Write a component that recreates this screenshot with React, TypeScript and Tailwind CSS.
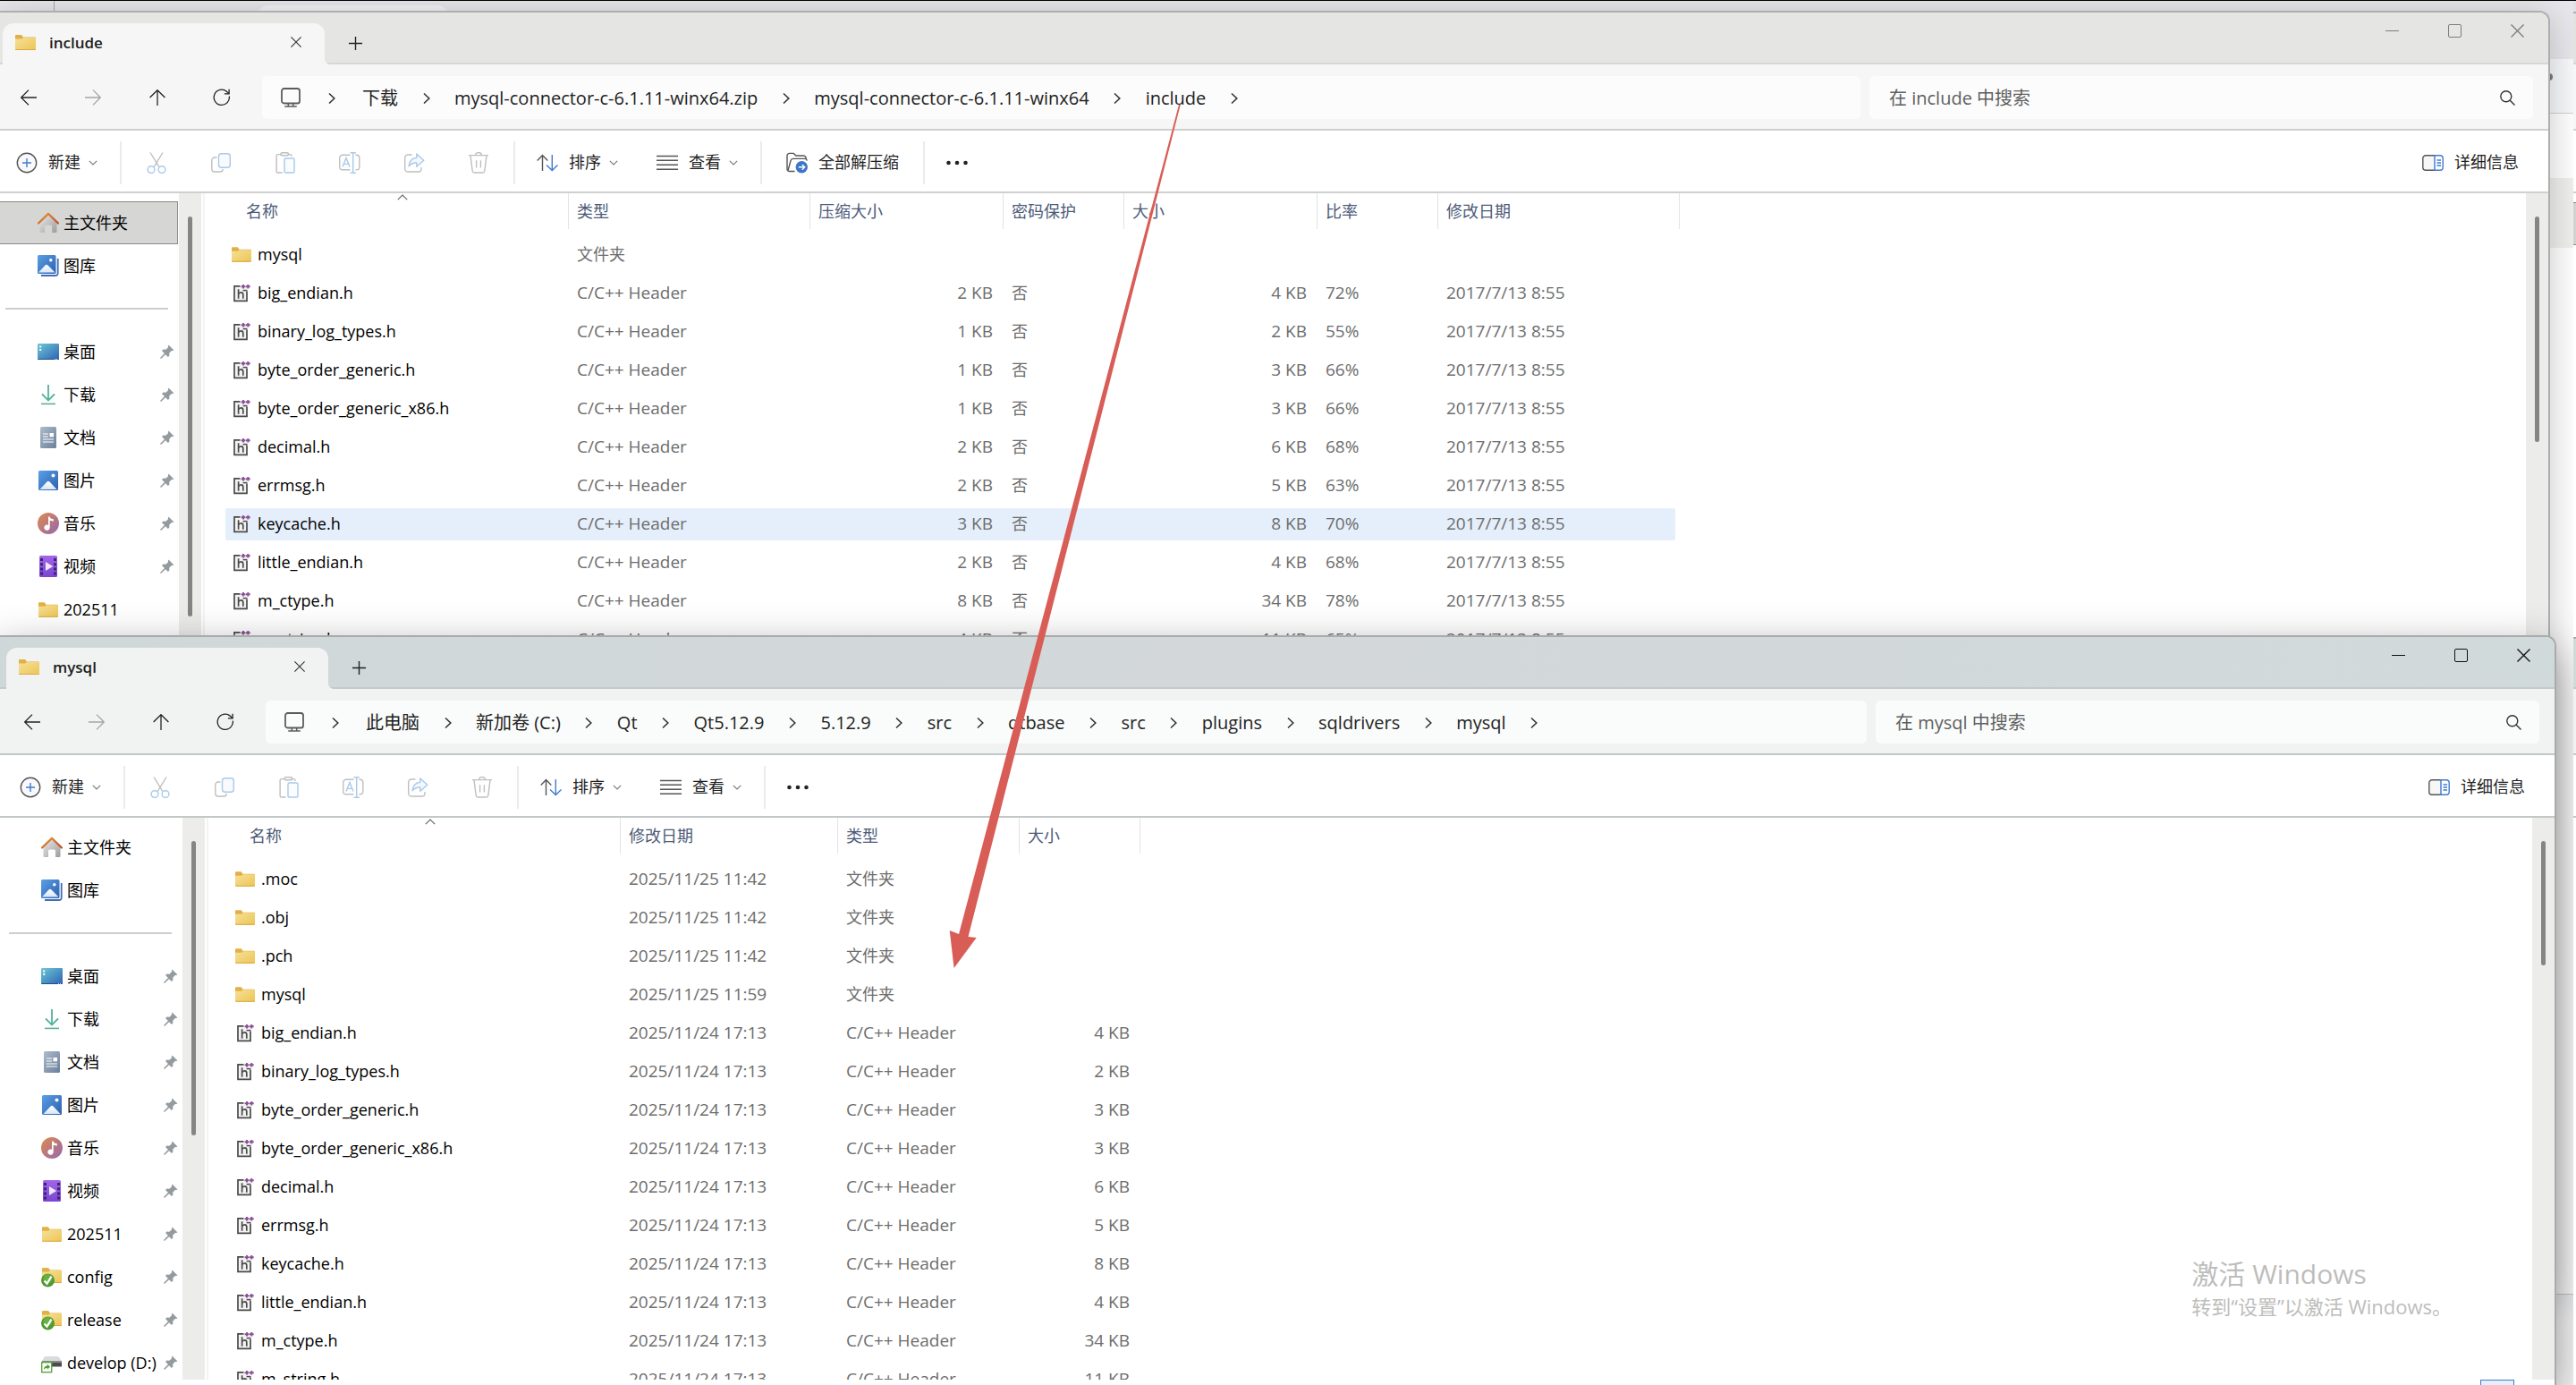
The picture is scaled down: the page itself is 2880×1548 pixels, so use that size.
import React from "react";
import type { ReactNode } from "react";

type IconProps = { className?: string };

const FolderIcon = ({ className = "h-[17px] w-[22px]" }: IconProps) => (
  <svg viewBox="0 0 23 17" className={className} aria-hidden="true">
    <defs>
      <linearGradient id="folderFace" x1="0" y1="0" x2="1" y2="1">
        <stop offset="0" stopColor="#f6e09a" />
        <stop offset="1" stopColor="#ecc554" />
      </linearGradient>
    </defs>
    <path d="M0 1a1 1 0 0 1 1-1h6l2 2.4H22a1 1 0 0 1 1 1V6H0z" fill="#e2b044" />
    <path d="M0 4.6h7.4L9 3h14v13a1 1 0 0 1-1 1H1a1 1 0 0 1-1-1z" fill="url(#folderFace)" />
    <path d="M0 16h23a1 1 0 0 1-1 1H1a1 1 0 0 1-1-1z" fill="#d9a83f" />
  </svg>
);

const SyncedFolderIcon = () => (
  <svg viewBox="0 0 24 24" className="size-6" aria-hidden="true">
    <path d="M1 3a1 1 0 0 1 1-1h6l2 2.4h12a1 1 0 0 1 1 1V8H1z" fill="#e2b044" />
    <path d="M1 6.6h7.4L10 5h13v13a1 1 0 0 1-1 1H2a1 1 0 0 1-1-1z" fill="url(#folderFace)" />
    <path d="M1 18h22a1 1 0 0 1-1 1H2a1 1 0 0 1-1-1z" fill="#d9a83f" />
    <circle cx="7.5" cy="16" r="7.5" fill="#4f9a33" />
    <circle cx="7.5" cy="14" r="5" fill="#7cc04f" opacity=".6" />
    <path d="M3.5 16.5l3 3.2 5-8" fill="none" stroke="#fff" strokeWidth="2.2" />
  </svg>
);

const HeaderFileIcon = () => (
  <svg viewBox="0 0 20 20" className="size-5" aria-hidden="true">
    <rect x="1" y="2" width="14" height="16.500" fill="#f3f3f3" />
    <path d="M7.500 1.900H1v16.500h14V7.500" fill="none" stroke="#4a4a4a" strokeWidth="1.700" />
    <path d="M5.600 5.300v10.400M5.600 10.800c.6-1.400 1.700-2 2.900-2 1.600 0 2.300 1 2.300 2.500v4.400" fill="none" stroke="#4a4a4a" strokeWidth="1.700" />
    <path d="M10.600 6.600h4.900" stroke="#4a4a4a" strokeWidth="1.500" />
    <path d="M11 -.2v4.800M8.600 2.200h4.800M16.300 -.2v4.800M13.900 2.200h4.800" stroke="#8a4f97" strokeWidth="1.900" />
  </svg>
);

const HomeIcon = () => (
  <svg viewBox="0 0 24 24" className="size-6" aria-hidden="true">
    <defs>
      <linearGradient id="homeWall" x1="0" y1="0" x2="1" y2="1">
        <stop offset="0" stopColor="#e9e9e9" />
        <stop offset="1" stopColor="#9d9d9d" />
      </linearGradient>
      <linearGradient id="homeRoof" x1="0" y1="0" x2="1" y2="1">
        <stop offset="0" stopColor="#e39a3c" />
        <stop offset="1" stopColor="#c14f27" />
      </linearGradient>
    </defs>
    <path d="M2.500 11.500L12 3l9.500 8.500V22a1 1 0 0 1-1 1H16v-7a1.500 1.500 0 0 0-1.500-1.500h-5A1.500 1.500 0 0 0 8 16v7H3.500a1 1 0 0 1-1-1z" fill="url(#homeWall)" />
    <path d="M1 12.500L12 1.800l11 10.700" fill="none" stroke="url(#homeRoof)" strokeWidth="2.400" strokeLinecap="round" strokeLinejoin="round" />
  </svg>
);

const BlueGradient = () => (
  <defs>
    <linearGradient id="photoBlue" x1="0" y1="0" x2="1" y2="1">
      <stop offset="0" stopColor="#5aa0e6" />
      <stop offset="1" stopColor="#2e5fae" />
    </linearGradient>
    <linearGradient id="photoHill" x1="0" y1="0" x2="0" y2="1">
      <stop offset="0" stopColor="#fff" />
      <stop offset="1" stopColor="#d5e6f8" />
    </linearGradient>
  </defs>
);

const GalleryIcon = () => (
  <svg viewBox="0 0 24 24" className="size-6" aria-hidden="true">
    <BlueGradient />
    <path d="M22.700 4v16.500a2.500 2.500 0 0 1-2.500 2.500H4" fill="none" stroke="#3f6db8" strokeWidth="1.800" />
    <rect x="0" y="0" width="20.500" height="21" rx="1.500" fill="url(#photoBlue)" />
    <circle cx="14.800" cy="5.800" r="1.700" fill="#fff" />
    <path d="M1 19.500L8.500 11.500a2 2 0 0 1 3 0l8 8z" fill="url(#photoHill)" />
  </svg>
);

const PicturesIcon = () => (
  <svg viewBox="0 0 24 24" className="size-6" aria-hidden="true">
    <BlueGradient />
    <rect x="1" y="1" width="22" height="22" rx="1.500" fill="url(#photoBlue)" />
    <circle cx="17.500" cy="6.500" r="2" fill="#fff" />
    <path d="M2.500 22l8-8.500a2 2 0 0 1 3 0l8 8.500z" fill="url(#photoHill)" />
  </svg>
);

const DesktopIcon = () => (
  <svg viewBox="0 0 24 24" className="size-6" aria-hidden="true">
    <defs>
      <linearGradient id="deskFace" x1="0" y1="0" x2="1" y2="1">
        <stop offset="0" stopColor="#6cc9d6" />
        <stop offset="1" stopColor="#2f62b3" />
      </linearGradient>
    </defs>
    <rect x="0" y="3" width="24" height="18" rx="1.200" fill="url(#deskFace)" />
    <path d="M0 20h24a1 1 0 0 1-1 1H1a1 1 0 0 1-1-1z" fill="#1f4f86" />
    <path d="M2.200 5.500h2v2h-2zM2.200 9h2v2h-2z" fill="#fff" />
    <path d="M19 20.400h4" stroke="#cfe0f4" strokeWidth="1" strokeDasharray="1 1" />
  </svg>
);

const DownloadsIcon = () => (
  <svg viewBox="0 0 24 24" className="size-6" fill="none" stroke="#5bb38c" strokeWidth="1.800" aria-hidden="true">
    <path d="M12 1v17M5 11.500l7 7 7-7" stroke="#54b39b" />
    <path d="M4 22.400h16" strokeWidth="1.600" />
  </svg>
);

const DocumentsIcon = () => (
  <svg viewBox="0 0 24 24" className="size-6" aria-hidden="true">
    <defs>
      <linearGradient id="docFace" x1="0" y1="0" x2="1" y2="1">
        <stop offset="0" stopColor="#aebccb" />
        <stop offset="1" stopColor="#6a7f9b" />
      </linearGradient>
    </defs>
    <rect x="3" y="0" width="18" height="24" rx="1.500" fill="url(#docFace)" />
    <path d="M6 8h6M6 11h6M6 14h12M6 17h12" stroke="#fff" strokeWidth="1.200" />
    <path d="M13.500 7h4.500v4.300h-4.500z" fill="#fff" />
  </svg>
);

const MusicIcon = () => (
  <svg viewBox="0 0 24 24" className="size-6" aria-hidden="true">
    <defs>
      <linearGradient id="musicFace" x1="0" y1="0" x2="1" y2="1">
        <stop offset="0" stopColor="#e08b4c" />
        <stop offset="1" stopColor="#9467b0" />
      </linearGradient>
    </defs>
    <circle cx="12" cy="12" r="12" fill="url(#musicFace)" />
    <path d="M12 4.500h1.700c.3 1.800 1.800 2.600 4 2.600v2.700c-1.700 0-3-.4-4-1.200V16.500A3.200 3.200 0 1 1 12 13.800z" fill="#fff" />
  </svg>
);

const VideosIcon = () => (
  <svg viewBox="0 0 24 24" className="size-6" aria-hidden="true">
    <defs>
      <linearGradient id="videoFace" x1="0" y1="0" x2="0" y2="1">
        <stop offset="0" stopColor="#a266e6" />
        <stop offset="1" stopColor="#7a45d3" />
      </linearGradient>
    </defs>
    <rect x="2" y="0" width="20" height="24" rx="1.500" fill="url(#videoFace)" />
    <path d="M3 3h3v3H3zM3 8.200h3v3H3zM3 13.400h3v3H3zM3 18.600h3v3H3zM18 3h3v3h-3zM18 8.200h3v3h-3zM18 13.400h3v3h-3zM18 18.600h3v3h-3z" fill="#3c2378" />
    <path d="M9 7l8.200 5L9 17z" fill="#eee8fa" />
  </svg>
);

const DriveIcon = () => (
  <svg viewBox="0 0 24 24" className="size-6" aria-hidden="true">
    <path d="M4 5h15l4 5H1z" fill="#d9dcde" />
    <path d="M1 10h22v6.500H1z" fill="#4b4b4b" />
    <path d="M1 10h22v2H1z" fill="#8a8a8a" />
    <rect x="0.700" y="11.700" width="11" height="11" fill="#fff" stroke="#5aa53c" strokeWidth="1.400" />
    <path d="M2.800 20c.2-3 1.600-4.600 4-4.600v-1.600l3.300 3-3.300 3v-1.700c-1.700 0-2.900.5-4 1.900z" fill="#4f9d34" />
  </svg>
);

const PinIcon = () => (
  <svg viewBox="0 0 16 16" className="size-4" aria-hidden="true">
    <path d="M9.500.5l6 6-1.500.6-1.200-.1-2.600 2.700.2 2.800-1.500 1.500L6 11.200 1 16l-1-.9 4.900-5L2 7.100l1.500-1.500 2.800.2L9 3.200l-.1-1.300z" fill="#949b9f" />
  </svg>
);

const ArrowIcon = ({ className = "" }: IconProps) => (
  <svg viewBox="0 0 18 18" className={"size-[18px] " + className} fill="none" stroke="currentColor" strokeWidth="1.300" aria-hidden="true">
    <path d="M.7 9H18M9 .6L.7 9 9 17.400" />
  </svg>
);

const RefreshIcon = () => (
  <svg viewBox="0 0 20 20" className="size-5" fill="none" stroke="currentColor" strokeWidth="1.300" aria-hidden="true">
    <path d="M18.300 8.600A8.600 8.600 0 1 1 15.400 3.300L18 5.800" />
    <path d="M18.100 .8v5.100h-5.200" />
  </svg>
);

const MonitorIcon = () => (
  <svg viewBox="0 0 22 22" className="size-[22px]" fill="none" stroke="#5c5c5c" strokeWidth="1.800" aria-hidden="true">
    <rect x="1" y="1" width="20" height="16.500" rx="2.600" />
    <path d="M8.300 17.500v3.200M13.700 17.500v3.200M4.200 21h13.600" strokeWidth="1.500" />
  </svg>
);

const ChevronRight = () => (
  <svg viewBox="0 0 8 14" className="h-3.5 w-2" fill="none" stroke="#333" strokeWidth="1.600" aria-hidden="true">
    <path d="M1 1.500L6.800 7 1 12.500" />
  </svg>
);

const ChevronDown = () => (
  <svg viewBox="0 0 10 6" className="h-1.5 w-2.5" fill="none" stroke="#777" strokeWidth="1.100" aria-hidden="true">
    <path d="M.8 .8L5 5 9.200 .8" />
  </svg>
);

const CrossIcon = ({ className = "size-3" }: IconProps) => (
  <svg viewBox="0 0 15 15" className={className} fill="none" stroke="currentColor" strokeWidth="1.400" aria-hidden="true">
    <path d="M.5 .5l14 14M14.500 .5l-14 14" />
  </svg>
);

const SearchIcon = () => (
  <svg viewBox="0 0 17 17" className="size-[17px]" fill="none" stroke="#333" strokeWidth="1.400" aria-hidden="true">
    <circle cx="6.800" cy="6.800" r="6" />
    <path d="M11 11l5.500 5.500" />
  </svg>
);

const NewIcon = () => (
  <svg viewBox="0 0 24 24" className="size-6" fill="none" aria-hidden="true">
    <circle cx="12" cy="12" r="10.700" fill="#f9f9fb" stroke="#555" strokeWidth="1.400" />
    <path d="M12 7v10M7 12h10" stroke="#3f7bd0" strokeWidth="1.400" />
  </svg>
);

const CutIcon = () => (
  <svg viewBox="0 0 24 24" className="size-6" fill="none" strokeWidth="1.400" aria-hidden="true">
    <path d="M5 .5l9.700 15.800M19 .5L9.300 16.300" stroke="#bfbfbf" />
    <circle cx="6" cy="19.600" r="3.900" stroke="#a9c9ec" />
    <circle cx="18" cy="19.600" r="3.900" stroke="#a9c9ec" />
  </svg>
);

const CopyIcon = () => (
  <svg viewBox="0 0 24 24" className="size-6" fill="none" strokeWidth="1.400" aria-hidden="true">
    <path d="M7.500 6H4.800a3 3 0 0 0-3 3v10a3 3 0 0 0 3 3h6.400a3 3 0 0 0 3-3" stroke="#bfbfbf" />
    <rect x="9.500" y="1.800" width="12.800" height="15.500" rx="3" fill="#f8fafd" stroke="#a9c9ec" />
  </svg>
);

const PasteIcon = () => (
  <svg viewBox="0 0 24 24" className="size-6" fill="none" strokeWidth="1.400" aria-hidden="true">
    <path d="M8 2.600H3.600a1.500 1.500 0 0 0-1.500 1.500v17.400A1.500 1.500 0 0 0 3.600 23h5M14.500 2.600h2.900a1.500 1.500 0 0 1 1.500 1.500v1" stroke="#bfbfbf" />
    <rect x="7" y=".8" width="8.500" height="3" rx="1.200" stroke="#bfbfbf" />
    <rect x="11" y="7" width="11" height="16" rx="1.300" fill="#fafcfe" stroke="#a9c9ec" />
  </svg>
);

const RenameIcon = () => (
  <svg viewBox="0 0 24 24" className="size-6" fill="none" strokeWidth="1.400" aria-hidden="true">
    <path d="M12.500 3.200H4A3.300 3.300 0 0 0 .7 6.500v10A3.300 3.300 0 0 0 4 19.800h8.500M18.500 3.200h1A3.300 3.300 0 0 1 22.800 6.500v10a3.300 3.300 0 0 1-3.300 3.300h-1" stroke="#bfbfbf" />
    <path d="M4 16.500L8 6.500l4 10M5.300 13.400h5.400M15.700 1v22M12.500 .8h6.400M12.500 23.200h6.400" stroke="#a9c9ec" />
  </svg>
);

const ShareIcon = () => (
  <svg viewBox="0 0 24 24" className="size-6" fill="none" strokeWidth="1.400" strokeLinejoin="round" aria-hidden="true">
    <path d="M9.500 3H5a3.300 3.300 0 0 0-3.300 3.300v12.400A3.300 3.300 0 0 0 5 22h11.700a3.300 3.300 0 0 0 3.300-3.300V17" stroke="#bfbfbf" />
    <path d="M14.800 2l8 7.300-8 7V12c-3.600-.2-6.500 1-8.800 3.800.5-5 3.500-9 8.800-9.500z" fill="#f3f8fd" stroke="#a9c9ec" />
  </svg>
);

const TrashIcon = () => (
  <svg viewBox="0 0 24 24" className="size-6" fill="none" stroke="#bfbfbf" strokeWidth="1.400" aria-hidden="true">
    <path d="M1 3.600h22M8.500 3.400a3.500 2.900 0 0 1 7 0M3 3.800l2.200 17.400A2.200 2.200 0 0 0 7.400 23h9.200a2.200 2.200 0 0 0 2.200-1.800L21 3.800M9.600 9.200v8.300M14.400 9.200v8.300" />
  </svg>
);

const SortIcon = () => (
  <svg viewBox="0 0 24 24" className="size-6" fill="none" strokeWidth="1.400" aria-hidden="true">
    <path d="M6.500 21V3.500M.7 9.400l5.800-6 5.800 6" stroke="#555" />
    <path d="M17.300 3v17.500M11 14.600l6.300 6 6.200-6" stroke="#3f7bd0" />
  </svg>
);

const ViewIcon = () => (
  <svg viewBox="0 0 24 24" className="size-6" fill="none" stroke="#555" strokeWidth="1.500" aria-hidden="true">
    <path d="M0 4.500h24M0 9.300h24M0 14.300h24M0 19.300h24" />
  </svg>
);

const ExtractIcon = () => (
  <svg viewBox="0 0 24 24" className="size-6" fill="none" stroke="#555" strokeWidth="1.400" aria-hidden="true">
    <path d="M9.500 21.500H3.600A2.600 2.600 0 0 1 1 18.900V4a2.600 2.600 0 0 1 2.600-2.600h4.600L11 4h8.500a3 3 0 0 1 2.600 3.500" />
    <path d="M2 20.500L5 9.600A3 3 0 0 1 7.800 7.400H21a2 2 0 0 1 2 2.200" />
    <circle cx="17.300" cy="16.800" r="6.700" fill="#3f73cb" stroke="none" />
    <path d="M13.800 16.800h6.500M17.800 13.900l2.900 2.900-2.900 2.900" stroke="#fff" />
  </svg>
);

const DetailsIcon = () => (
  <svg viewBox="0 0 24 18" className="h-[18px] w-6" fill="none" strokeWidth="1.400" aria-hidden="true">
    <path d="M14 .8H4A3.200 3.200 0 0 0 .8 4v10A3.200 3.200 0 0 0 4 17.200h10" fill="#f7f7f7" stroke="#555" />
    <path d="M14 .8h6A3.200 3.200 0 0 1 23.200 4v10a3.200 3.200 0 0 1-3.200 3.200h-6z" stroke="#3f7bd0" />
    <path d="M16.500 6h4.500M16.500 9h4.500M16.500 12h4.500" stroke="#3f7bd0" />
  </svg>
);

const MoreIcon = () => (
  <svg viewBox="0 0 24 24" className="size-6" fill="#222" aria-hidden="true">
    <circle cx="2.500" cy="12" r="2.300" />
    <circle cx="12" cy="12" r="2.300" />
    <circle cx="21.500" cy="12" r="2.300" />
  </svg>
);

type Theme = {
  frame: string;
  title: string;
  surface: string;
  flare: string;
  field: string;
  line: string;
  controls: string;
};

const inactiveTheme: Theme = {
  frame: "border-[#aeaeae] shadow-[0_6px_40px_rgba(0,0,0,0.22)]",
  title: "bg-[#e5e5e3] shadow-[inset_0_-2px_0_#d6d6d4]",
  surface: "bg-[#f6f6f6]",
  flare: "text-[#f6f6f6]",
  field: "bg-[#fcfcfc]",
  line: "border-[#d0d0d0]",
  controls: "text-[#7d7d7d]",
};

const activeTheme: Theme = {
  frame: "border-[#a9abaa] shadow-[0_16px_48px_rgba(0,0,0,0.42)]",
  title: "bg-linear-to-r from-[#cfd8d9] via-[#d3d7da] to-[#d1dada] shadow-[inset_0_-2px_0_#c5c9cc]",
  surface: "bg-[#f0f3f2]",
  flare: "text-[#f0f3f2]",
  field: "bg-[#fafcfb]",
  line: "border-[#c2c7c8]",
  controls: "text-[#111111]",
};

function TitleBar({ name, theme, inset }: { name: string; theme: Theme; inset: string }) {
  return (
    <header className={"flex h-[58px] shrink-0 rounded-tr-[10px] " + theme.title + " " + inset}>
      <div className={"relative mt-3 ml-[3px] flex w-[360px] items-center rounded-t-xl pr-[26px] pb-1 pl-3.5 " + theme.surface}>
        <FolderIcon className="h-[17px] w-[23px]" />
        <span className="ml-[15px] flex-1 pt-0.5 text-[17px] font-semibold text-[#1d1d1d]">{name}</span>
        <button type="button" aria-label="关闭标签页" className="text-[#333]">
          <CrossIcon className="size-3" />
        </button>
        <svg viewBox="0 0 6 6" className={"absolute -right-1.5 bottom-0 size-1.5 " + theme.flare} aria-hidden="true">
          <path d="M0 0v6h6A6 6 0 0 1 0 0z" fill="currentColor" />
        </svg>
      </div>
      <button type="button" aria-label="新建标签页" className="mt-3 ml-[27px] flex items-center pb-0.5 text-[#222]">
        <svg viewBox="0 0 15 15" className="size-[15px]" stroke="currentColor" strokeWidth="1.400" aria-hidden="true">
          <path d="M7.500 0v15M0 7.500h15" />
        </svg>
      </button>
      <div className={"ml-auto flex h-10 " + theme.controls}>
        <button type="button" aria-label="最小化" className="flex w-[70px] items-center justify-center">
          <span className="h-px w-[15px] bg-current" />
        </button>
        <button type="button" aria-label="最大化" className="flex w-[70px] items-center justify-center">
          <span className="size-[15px] rounded-[2px] border border-current" />
        </button>
        <button type="button" aria-label="关闭" className="flex w-[70px] items-center justify-center">
          <CrossIcon className="size-[15px]" />
        </button>
      </div>
    </header>
  );
}

function AddressRow({ name, path, theme, inset }: { name: string; path: string[]; theme: Theme; inset: string }) {
  return (
    <div className={"flex h-[74px] shrink-0 items-start border-b-2 pt-[13px] pr-[17px] " + theme.surface + " " + theme.line + " " + inset}>
      <nav aria-label="导航" className="flex h-12 w-[293px] shrink-0 items-center text-[#222]">
        <button type="button" aria-label="后退" className="ml-[23px]">
          <ArrowIcon />
        </button>
        <button type="button" aria-label="前进" className="ml-[54px] text-[#a5a5a5]">
          <ArrowIcon className="rotate-180" />
        </button>
        <button type="button" aria-label="上一级" className="ml-[54px]">
          <ArrowIcon className="rotate-90" />
        </button>
        <button type="button" aria-label="刷新" className="ml-[53px]">
          <RefreshIcon />
        </button>
      </nav>
      <div className={"flex h-12 min-w-0 flex-1 items-center rounded-md pl-[21px] text-[20px] text-[#222] " + theme.field}>
        <MonitorIcon />
        {path.map((part, i) => (
          <div key={i} className="flex items-center pt-0.5">
            <span className={i === 0 ? "flex w-[69px] justify-center" : "flex w-[63px] justify-center"}>
              <ChevronRight />
            </span>
            <button type="button" className="whitespace-nowrap">
              {part}
            </button>
          </div>
        ))}
        <span className="flex w-[63px] justify-center pt-0.5">
          <ChevronRight />
        </span>
      </div>
      <label className={"ml-2.5 flex h-12 w-[742px] shrink-0 items-center rounded-md pr-5 pl-[22px] " + theme.field}>
        <input
          type="search"
          aria-label={"在 " + name + " 中搜索"}
          placeholder={"在 " + name + " 中搜索"}
          className="min-w-0 flex-1 bg-transparent pt-0.5 text-[20px] text-[#222] outline-none placeholder:text-[#5f5f5f]"
        />
        <SearchIcon />
      </label>
    </div>
  );
}

const Divider = () => <span className="h-12 w-0.5 bg-[#ebebeb]" />;

function LabelButton({ icon, label, menu }: { icon: ReactNode; label: string; menu?: boolean }) {
  return (
    <button type="button" className="flex items-center text-[18px] whitespace-nowrap text-[#1f1f1f]">
      {icon}
      <span className="ml-3">{label}</span>
      {menu && (
        <span className="ml-[9px]">
          <ChevronDown />
        </span>
      )}
    </button>
  );
}

const fileActions: [string, ReactNode][] = [
  ["剪切", <CutIcon />],
  ["复制", <CopyIcon />],
  ["粘贴", <PasteIcon />],
  ["重命名", <RenameIcon />],
  ["共享", <ShareIcon />],
  ["删除", <TrashIcon />],
];

function Toolbar({ extract, theme, inset }: { extract: boolean; theme: Theme; inset: string }) {
  return (
    <div className={"flex h-[70px] shrink-0 items-center border-b-2 bg-white pt-[3px] pr-[33px] " + theme.line + " " + inset}>
      <div className="flex w-[134px] pl-[18px]">
        <LabelButton icon={<NewIcon />} label="新建" menu />
      </div>
      <Divider />
      <div className="flex gap-12 pr-[27px] pl-[27px]">
        {fileActions.map(([label, icon]) => (
          <button key={label} type="button" disabled aria-label={label}>
            {icon}
          </button>
        ))}
      </div>
      <Divider />
      <div className="flex gap-[43px] pr-[25px] pl-6">
        <LabelButton icon={<SortIcon />} label="排序" menu />
        <LabelButton icon={<ViewIcon />} label="查看" menu />
      </div>
      <Divider />
      {extract && (
        <>
          <div className="pr-[27px] pl-[27px]">
            <LabelButton icon={<ExtractIcon />} label="全部解压缩" />
          </div>
          <Divider />
        </>
      )}
      <button type="button" aria-label="更多" className="ml-6">
        <MoreIcon />
      </button>
      <div className="ml-auto">
        <LabelButton icon={<DetailsIcon />} label="详细信息" />
      </div>
    </div>
  );
}

type Place = { label: string; icon: ReactNode; pinned?: boolean; selected?: boolean };

const libraries: Place[] = [
  { label: "桌面", icon: <DesktopIcon />, pinned: true },
  { label: "下载", icon: <DownloadsIcon />, pinned: true },
  { label: "文档", icon: <DocumentsIcon />, pinned: true },
  { label: "图片", icon: <PicturesIcon />, pinned: true },
  { label: "音乐", icon: <MusicIcon />, pinned: true },
  { label: "视频", icon: <VideosIcon />, pinned: true },
];

const recentFolder = <FolderIcon className="mx-px h-[17px] w-[22px]" />;

function PlaceRow({ place }: { place: Place }) {
  return (
    <li>
      <button
        type="button"
        className={
          "flex h-12 items-center pr-1 text-[18px] whitespace-nowrap text-black " +
          (place.selected ? "-ml-1 w-[203px] border border-[#8b8c8a] bg-[#d6d6d4] pl-[45px]" : "w-[199px] pl-[42px]")
        }
      >
        {place.icon}
        <span className="ml-[5px]">{place.label}</span>
        {place.pinned && (
          <span className="ml-auto">
            <PinIcon />
          </span>
        )}
      </button>
    </li>
  );
}

function Scrollbar({ thumb }: { thumb: string }) {
  return (
    <div className="flex w-[25px] shrink-0 justify-center bg-[#ececeb] pt-[26px]">
      <span className={"w-[5px] rounded-full bg-[#858585] " + thumb} />
    </div>
  );
}

function Sidebar({ homeSelected, extra, thumb }: { homeSelected?: boolean; extra: Place[]; thumb: string }) {
  return (
    <aside className="flex shrink-0 overflow-hidden">
      <ul className="w-[200px] pt-[9px]">
        <PlaceRow place={{ label: "主文件夹", icon: <HomeIcon />, selected: homeSelected }} />
        <PlaceRow place={{ label: "图库", icon: <GalleryIcon /> }} />
        <li className="flex h-12 items-center pr-3 pl-1.5">
          <span className="h-0.5 flex-1 bg-[#cdcdcd]" />
        </li>
        {[...libraries, ...extra].map((p) => (
          <PlaceRow key={p.label} place={p} />
        ))}
      </ul>
      <Scrollbar thumb={thumb} />
      <div className="ml-0.5 w-0.5 bg-[#f3f3f3]" />
    </aside>
  );
}

type Column = { title: string; width: string; align?: "right" };
type FileRow = { name: string; folder?: boolean; selected?: boolean; cells: string[] };

const isChinese = (text: string) => /[\u4e00-\u9fff]/.test(text);

function FileTable({ columns, rows }: { columns: Column[]; rows: FileRow[] }) {
  return (
    <table className="w-max table-fixed border-collapse self-start text-left">
      <colgroup>
        {columns.map((c) => (
          <col key={c.title} className={c.width} />
        ))}
      </colgroup>
      <thead>
        <tr className="h-[47px] align-top">
          {columns.map((c, i) => (
            <th key={c.title} scope="col" className="p-0 font-normal">
              <div
                className={
                  "relative flex h-10 items-center border-r border-[#e3e3e3] text-[18px] text-[#4c5a78] " +
                  (i === 0 ? "pl-[23px]" : "pl-[9px]")
                }
              >
                {c.title}
                {i === 0 && (
                  <svg viewBox="0 0 12 7" className="absolute top-px left-1/2 h-[7px] w-3" fill="none" stroke="#666" strokeWidth="1.200" aria-hidden="true">
                    <path d="M.8 6.200L6 1l5.200 5.200" />
                  </svg>
                )}
              </div>
            </th>
          ))}
        </tr>
      </thead>
      <tbody>
        {rows.map((row) => (
          <tr key={row.name} className="h-[43px]">
            <td className="p-0">
              <div
                className={
                  "flex h-9 items-center text-[18px] whitespace-nowrap text-black " +
                  (row.folder ? "gap-[7px] pl-[7px]" : "gap-[7px] pl-[9px]") +
                  (row.selected ? " rounded-l-[2px] bg-[#e5effb]" : "")
                }
              >
                {row.folder ? <FolderIcon /> : <HeaderFileIcon />}
                <span>{row.name}</span>
              </div>
            </td>
            {row.cells.map((cell, i) => {
              const last = i === row.cells.length - 1;
              const right = columns[i + 1].align === "right";
              return (
                <td key={i} className="p-0">
                  <div
                    className={
                      "flex h-9 items-center whitespace-nowrap text-[#6d6d6d] " +
                      (isChinese(cell) ? "text-[18px] " : "text-[19px] ") +
                      (right ? "justify-end pr-3 " : "pl-[9px] ") +
                      (row.selected ? "bg-[#e5effb] " : "") +
                      (last && !right ? "mr-[5px] rounded-r-[2px]" : "")
                    }
                  >
                    {cell}
                  </div>
                </td>
              );
            })}
          </tr>
        ))}
      </tbody>
    </table>
  );
}

const zipColumns: Column[] = [
  { title: "名称", width: "w-[384px]" },
  { title: "类型", width: "w-[270px]" },
  { title: "压缩大小", width: "w-[216px]", align: "right" },
  { title: "密码保护", width: "w-[135px]" },
  { title: "大小", width: "w-[216px]", align: "right" },
  { title: "比率", width: "w-[135px]" },
  { title: "修改日期", width: "w-[270px]" },
];

const zipEntries: [string, string, string, string][] = [
  ["big_endian.h", "2 KB", "4 KB", "72%"],
  ["binary_log_types.h", "1 KB", "2 KB", "55%"],
  ["byte_order_generic.h", "1 KB", "3 KB", "66%"],
  ["byte_order_generic_x86.h", "1 KB", "3 KB", "66%"],
  ["decimal.h", "2 KB", "6 KB", "68%"],
  ["errmsg.h", "2 KB", "5 KB", "63%"],
  ["keycache.h", "3 KB", "8 KB", "70%"],
  ["little_endian.h", "2 KB", "4 KB", "68%"],
  ["m_ctype.h", "8 KB", "34 KB", "78%"],
  ["m_string.h", "4 KB", "11 KB", "65%"],
];

const zipRows: FileRow[] = [
  { name: "mysql", folder: true, cells: ["文件夹", "", "", "", "", ""] },
  ...zipEntries.map(([name, packed, size, ratio]) => ({
    name,
    selected: name === "keycache.h",
    cells: ["C/C++ Header", packed, "否", size, ratio, "2017/7/13 8:55"],
  })),
];

const diskColumns: Column[] = [
  { title: "名称", width: "w-[438px]" },
  { title: "修改日期", width: "w-[243px]" },
  { title: "类型", width: "w-[203px]" },
  { title: "大小", width: "w-[135px]", align: "right" },
];

const diskRows: FileRow[] = [
  { name: ".moc", folder: true, cells: ["2025/11/25 11:42", "文件夹", ""] },
  { name: ".obj", folder: true, cells: ["2025/11/25 11:42", "文件夹", ""] },
  { name: ".pch", folder: true, cells: ["2025/11/25 11:42", "文件夹", ""] },
  { name: "mysql", folder: true, cells: ["2025/11/25 11:59", "文件夹", ""] },
  ...zipEntries.map(([name, , size]) => ({
    name,
    cells: ["2025/11/24 17:13", "C/C++ Header", size],
  })),
];

type ExplorerProps = {
  name: string;
  path: string[];
  theme: Theme;
  inset: string;
  place: string;
  extract?: boolean;
  homeSelected?: boolean;
  extraPlaces: Place[];
  columns: Column[];
  rows: FileRow[];
  sideThumb: string;
  mainThumb: string;
  statusBar?: boolean;
};

function Explorer(p: ExplorerProps) {
  return (
    <section
      aria-label={p.name}
      className={"absolute flex flex-col rounded-tr-xl border-t-2 border-r-2 bg-white " + p.place + " " + p.theme.frame}
    >
      <TitleBar name={p.name} theme={p.theme} inset={p.inset} />
      <AddressRow name={p.name} path={p.path} theme={p.theme} inset={p.inset} />
      <Toolbar extract={!!p.extract} theme={p.theme} inset={p.inset} />
      <div className={"flex min-h-0 flex-1 overflow-hidden " + p.inset}>
        <Sidebar homeSelected={p.homeSelected} extra={p.extraPlaces} thumb={p.sideThumb} />
        <main className="ml-[23px] flex min-w-0 flex-1 overflow-hidden">
          <FileTable columns={p.columns} rows={p.rows} />
        </main>
        <Scrollbar thumb={p.mainThumb} />
      </div>
      {p.statusBar && (
        <footer className="flex h-1.5 shrink-0 justify-end overflow-hidden pr-[45px]">
          <button type="button" aria-label="详细信息视图" className="h-8 w-[38px] border border-[#3f78d0] bg-[#e6f0fb]" />
        </footer>
      )}
    </section>
  );
}

function Backdrop() {
  return (
    <div className="absolute inset-0 flex flex-col bg-white" aria-hidden="true">
      <div className="flex h-[66px] items-start border-t border-black bg-[#e8e8ec]">
        <span className="h-[65px] w-[61px] border-r border-[#a9a9ad]" />
        <span className="mt-[5px] ml-[227px] h-[60px] w-[213px] rounded-t-xl bg-[#f4f4f6]" />
      </div>
      <div className="flex h-[61px] items-start justify-end border-b border-[#cfd1d4] bg-[#f8f9fb] pt-4 pr-[23px]">
        <span className="size-2 rounded-full bg-[#7c7c80]" />
      </div>
      <div className="h-[72px] bg-white" />
      <div className="h-[78px] bg-[#f0f0ef]" />
      <div className="flex-1 bg-white" />
      <div className="h-[102px] border-t border-[#c9ccce] bg-linear-to-b from-[#eef1f4] to-[#f7f7f7] to-30%" />
    </div>
  );
}

function NeighbourEdge() {
  return (
    <div className="flex w-[3px] shrink-0 flex-col" aria-hidden="true">
      <div className="h-[13px] border-t border-black bg-[#e2e2e6]" />
      <div className="h-[59px] border-y-2 border-t-[#aeaeae] border-b-[#d6d6d4] bg-[#e2e2e0]" />
      <div className="h-[74px] border-b-2 border-[#d0d0d0] bg-[#f6f6f6]" />
      <div className="h-[70px] border-b-2 border-[#d0d0d0] bg-white" />
      <div className="mt-2.5 h-12 border-y border-[#8b8c8a] bg-[#d2d2d0]" />
      <div className="h-[438px] bg-white" />
      <div className="h-[58px] border-y-2 border-t-[#a9abaa] border-b-[#c5c9cc] bg-[#d1dada]" />
      <div className="h-[74px] border-b-2 border-[#c2c7c8] bg-[#f0f3f2]" />
      <div className="h-[70px] border-b-2 border-[#c2c7c8] bg-white" />
      <div className="flex-1 bg-white" />
    </div>
  );
}

export default function App() {
  return (
    <div className="relative flex h-screen overflow-hidden bg-white font-['Open_Sans','Noto_Sans_CJK_SC',sans-serif]">
      <div className="relative min-w-0 flex-1 overflow-hidden">
        <Backdrop />
        <Explorer
          name="include"
          path={["下载", "mysql-connector-c-6.1.11-winx64.zip", "mysql-connector-c-6.1.11-winx64", "include"]}
          theme={inactiveTheme}
          inset=""
          place="top-3 right-[26px] bottom-[102px] left-0"
          extract
          homeSelected
          extraPlaces={[{ label: "202511", icon: recentFolder }]}
          columns={zipColumns}
          rows={zipRows}
          sideThumb="h-[447px]"
          mainThumb="h-[252px]"
        />
        <Explorer
          name="mysql"
          path={["此电脑", "新加卷 (C:)", "Qt", "Qt5.12.9", "5.12.9", "src", "qtbase", "src", "plugins", "sqldrivers", "mysql"]}
          theme={activeTheme}
          inset="pl-1"
          place="top-[710px] right-[19px] bottom-0 left-0"
          extraPlaces={[
            { label: "202511", icon: recentFolder, pinned: true },
            { label: "config", icon: <SyncedFolderIcon />, pinned: true },
            { label: "release", icon: <SyncedFolderIcon />, pinned: true },
            { label: "develop (D:)", icon: <DriveIcon />, pinned: true },
          ]}
          columns={diskColumns}
          rows={diskRows}
          sideThumb="h-[329px]"
          mainThumb="h-[139px]"
          statusBar
        />
        <div className="absolute right-[136px] bottom-[70px] text-[#bdbdbb]">
          <p className="text-[30px] leading-9">激活 Windows</p>
          <p className="text-[22px] leading-9">转到“设置”以激活 Windows。</p>
        </div>
        <svg viewBox="0 0 260 966" className="pointer-events-none absolute top-[117px] left-[1060px] h-[966px] w-[260px]" aria-hidden="true">
          <path d="M258 0L12 927 1.700 923 6.600 965 31.700 931 22.500 930 259.800 0z" fill="#d95d57" />
        </svg>
      </div>
      <NeighbourEdge />
    </div>
  );
}
